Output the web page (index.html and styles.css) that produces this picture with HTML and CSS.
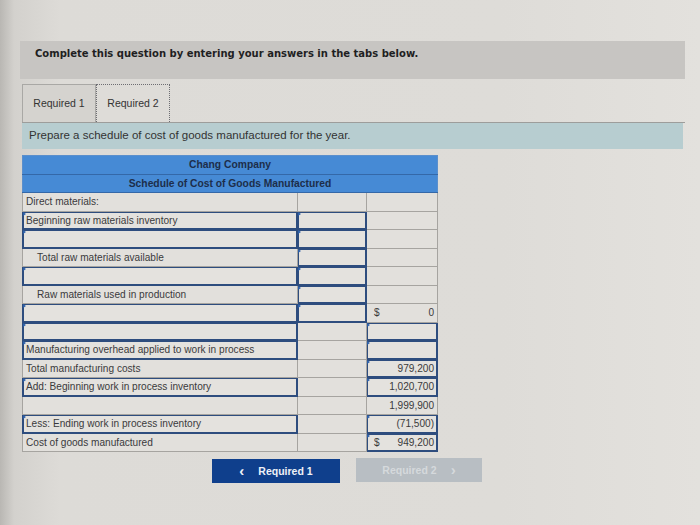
FILE: index.html
```html
<!DOCTYPE html>
<html>
<head>
<meta charset="utf-8">
<link rel="stylesheet" href="styles.css">
</head>
<body>
<div class="page">
  <div class="header-bar">Complete this question by entering your answers in the tabs below.</div>
  <div class="tabs">
    <div class="tab">Required 1</div>
    <div class="tab tab-active">Required 2</div>
  </div>
  <div class="instr">Prepare a schedule of cost of goods manufactured for the year.</div>
  <table class="sched">
    <colgroup><col class="c1"><col class="c2"><col class="c3"></colgroup>
    <tr class="head"><th colspan="3">Chang Company</th></tr>
    <tr class="head"><th colspan="3">Schedule of Cost of Goods Manufactured</th></tr>
    <tr><td>Direct materials:</td><td></td><td></td></tr>
    <tr><td class="in">Beginning raw materials inventory</td><td class="in"></td><td></td></tr>
    <tr><td class="in"></td><td class="in"></td><td></td></tr>
    <tr><td class="ind">Total raw materials available</td><td class="in"></td><td></td></tr>
    <tr><td class="in"></td><td class="in"></td><td></td></tr>
    <tr><td class="ind">Raw materials used in production</td><td class="in"></td><td></td></tr>
    <tr><td class="in"></td><td class="in"></td><td class="num"><span class="dol">$</span>0</td></tr>
    <tr><td class="in"></td><td></td><td class="in"></td></tr>
    <tr><td class="in">Manufacturing overhead applied to work in process</td><td></td><td class="in"></td></tr>
    <tr><td>Total manufacturing costs</td><td></td><td class="in num">979,200</td></tr>
    <tr><td class="in">Add: Beginning work in process inventory</td><td></td><td class="in num">1,020,700</td></tr>
    <tr><td></td><td></td><td class="num">1,999,900</td></tr>
    <tr><td class="in">Less: Ending work in process inventory</td><td></td><td class="in num">(71,500)</td></tr>
    <tr><td>Cost of goods manufactured</td><td></td><td class="in num"><span class="dol">$</span>949,200</td></tr>
  </table>
  <div class="nav">
    <div class="btn btn-prev"><span class="chev">&lsaquo;</span>Required 1</div>
    <div class="btn btn-next">Required 2<span class="chev chev-r">&rsaquo;</span></div>
  </div>
</div>
</body>
</html>
```
FILE: styles.css
```css
html, body {
  margin: 0;
  padding: 0;
}
body {
  width: 700px;
  height: 525px;
  overflow: hidden;
  background: linear-gradient(90deg, #b9b7b3 0px, #d3d1cd 14px, #dddbd7 60px, #dedcd8 500px, #e3e1dd 700px);
  font-family: "Liberation Sans", Arial, sans-serif;
  color: #2e2e30;
}
.page {
  padding: 41px 0 0 20px;
  width: 665px;
}
.header-bar {
  height: 38px;
  box-sizing: border-box;
  background: #c7c5c2;
  padding: 7px 0 0 15px;
  font-family: "DejaVu Sans", Verdana, sans-serif;
  font-weight: bold;
  font-size: 10px;
  color: #1f1f22;
}
.tabs {
  display: flex;
  margin: 5px 0 0 2px;
  height: 38px;
  border-bottom: 1px solid #9d9d9b;
}
.tab {
  width: 74px;
  box-sizing: border-box;
  border: 1px solid #a9a8a5;
  border-bottom: none;
  background: #d5d3cf;
  font-size: 10.5px;
  display: flex;
  align-items: center;
  justify-content: center;
  padding-bottom: 2px;
  color: #333;
}
.tab-active {
  background: #dedcd8;
  border: 1px dotted #6d6d72;
  border-bottom: none;
}
.instr {
  margin-left: 2px;
  height: 26px;
  box-sizing: border-box;
  background: #b7cdd0;
  padding: 6px 0 0 7px;
  font-size: 11.5px;
  color: #333;
  width: 661px;
}
.sched {
  margin: 6px 0 0 2px;
  border-collapse: collapse;
  table-layout: fixed;
  width: 415px;
  font-size: 10.1px;
  color: #3a3a3c;
}
.c1 { width: 275px; }
.c2 { width: 69px; }
.c3 { width: 71px; }
.sched tr {
  height: 18.5px;
}
.sched th {
  background: #468ad5;
  color: #1d2e4a;
  font-size: 10.3px;
  font-weight: bold;
  line-height: 11px;
  height: 18.5px;
  padding: 0;
  border: 1px solid #5b8fcc;
  border-bottom-color: #3468a8;
  box-sizing: border-box;
}
.sched td {
  height: 18.5px;
  line-height: 11px;
  padding: 0 3px;
  border: 1px solid #a6a4a0;
  background: #e2e0dc;
  white-space: nowrap;
  box-sizing: border-box;
}
.sched td.in {
  box-shadow: inset 0 0 0 1px #2e4d7e;
  border-color: #2e4d7e;
  background: #e4e2de;
  position: relative;
}
.sched td.in::before {
  content: "";
  position: absolute;
  left: 0;
  top: 0;
  border-left: 3px solid #2c5fa8;
  border-top: 2px solid transparent;
  border-bottom: 2px solid transparent;
}
.sched td.ind {
  padding-left: 14px;
}
.sched td.num {
  text-align: right;
  padding-right: 3px;
}
.dol {
  float: left;
  padding-left: 4px;
}
.nav {
  display: flex;
  margin: 7px 0 0 192px;
  gap: 16px;
}
.btn {
  width: 128px;
  height: 24px;
  box-sizing: border-box;
  display: flex;
  align-items: center;
  justify-content: center;
  font-size: 10.5px;
  font-weight: bold;
}
.btn-prev {
  background: #0f3f8c;
  color: #eef1f7;
}
.btn-next {
  margin-top: -1px;
  width: 126px;
  background: #b8bec3;
  color: #d5d9dc;
}
.chev {
  font-size: 15px;
  margin-right: 14px;
  line-height: 10px;
}
.chev-r {
  margin: 0 0 0 14px;
}
```
